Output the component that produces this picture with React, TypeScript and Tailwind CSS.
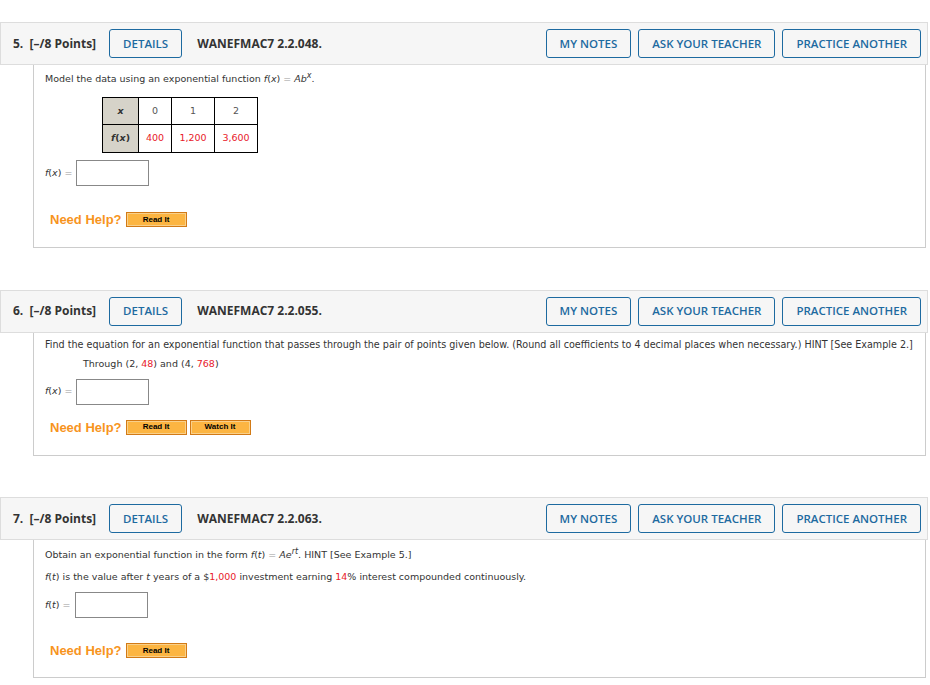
import React from 'react';

const head = { fontFamily: '"Open Sans", "Liberation Sans", sans-serif' };
const body = { fontFamily: '"DejaVu Sans", Verdana, sans-serif' };

function HeaderButton({ label }: { label: string }) {
  return (
    <button className="h-[29px] px-[13px] rounded-[3px] border border-[#1d6aa0] bg-[#f6f6f6] text-[11.5px] font-semibold text-[#1d6aa0]">
      {label}
    </button>
  );
}

function Header({ num, code }: { num: number; code: string }) {
  return (
    <div style={head} className="flex items-center h-[43px] bg-[#f6f6f6] border border-[#dddddd] pl-[12px] pr-[6px]">
      <span className="text-[12px] font-bold text-[#333333] whitespace-pre">{`${num}.  [–/8 Points]`}</span>
      <div className="ml-[13px]">
        <HeaderButton label="DETAILS" />
      </div>
      <span className="ml-[15px] text-[12px] font-bold text-[#333333]">{code}</span>
      <div className="ml-auto flex gap-[7px]">
        <HeaderButton label="MY NOTES" />
        <HeaderButton label="ASK YOUR TEACHER" />
        <HeaderButton label="PRACTICE ANOTHER" />
      </div>
    </div>
  );
}

function HelpButton({ label }: { label: string }) {
  return (
    <span
      style={{ fontFamily: '"Liberation Sans", Arial, sans-serif' }}
      className="inline-flex items-center justify-center w-[61px] h-[15px] border border-[#d27a16] bg-[#fcb542] shadow-[inset_0_0_0_1px_#f9d08a] text-[8px] font-bold text-black leading-none"
    >
      {label}
    </span>
  );
}

function NeedHelp({ buttons }: { buttons: string[] }) {
  return (
    <div className="flex items-center pl-[5px]">
      <span style={{ fontFamily: '"Liberation Sans", Arial, sans-serif' }} className="text-[13px] font-bold text-[#f7941d]">
        Need Help?
      </span>
      <div className="ml-[4px] flex gap-[3px]">
        {buttons.map((b) => (
          <HelpButton key={b} label={b} />
        ))}
      </div>
    </div>
  );
}

function Answer({ v }: { v: string }) {
  return (
    <div className="flex items-center">
      <span className="text-[9.5px] text-[#333333]">
        <i>f</i>(<i>{v}</i>) <span className="text-[#999999]">=</span>
      </span>
      <div className="ml-[4px] w-[73px] h-[26px] border border-[#888888] bg-white" />
    </div>
  );
}

function Body({ children }: { children: React.ReactNode }) {
  return (
    <div style={body} className="ml-[33px] mr-[2px] border-x border-b border-[#cccccc] pl-[11px] text-[9.5px] text-[#333333]">
      {children}
    </div>
  );
}

const red = 'text-[#e8202a]';

export default function App() {
  return (
    <div className="w-[930px] h-[685px] bg-white overflow-hidden pt-[22px] pr-[2px]">
      {/* 5 */}
      <Header num={5} code="WANEFMAC7 2.2.048." />
      <Body>
        <div className="pt-[6px] leading-[16px]">
          Model the data using an exponential function <i>f</i>(<i>x</i>) <span className="text-[#999]">=</span> <i>Ab</i>
          <sup className="text-[8px]"><i>x</i></sup>.
        </div>
        <table className="ml-[57px] mt-[10px] border-collapse text-center text-[9.5px]">
          <tbody>
            <tr className="h-[27px]">
              <td className="w-[36px] border border-black bg-[#d6d3c9] font-bold italic">x</td>
              <td className="w-[33px] border border-black text-[#555]">0</td>
              <td className="w-[43px] border border-black text-[#555]">1</td>
              <td className="w-[43px] border border-black text-[#555]">2</td>
            </tr>
            <tr className="h-[28px]">
              <td className="border border-black bg-[#d6d3c9] font-bold">
                <i>f</i>(<i>x</i>)
              </td>
              <td className={`border border-black ${red}`}>400</td>
              <td className={`border border-black ${red}`}>1,200</td>
              <td className={`border border-black ${red}`}>3,600</td>
            </tr>
          </tbody>
        </table>
        <div className="mt-[7px]">
          <Answer v="x" />
        </div>
        <div className="mt-[24px] pb-[17px]">
          <NeedHelp buttons={['Read It']} />
        </div>
      </Body>

      {/* 6 */}
      <div className="mt-[42px]">
        <Header num={6} code="WANEFMAC7 2.2.055." />
      </div>
      <Body>
        <div className="pt-[4px] leading-[16px] whitespace-nowrap text-[9.6px]">
          Find the equation for an exponential function that passes through the pair of points given below. (Round all coefficients to 4 decimal places when necessary.) HINT [See Example 2.]
        </div>
        <div className="mt-[3px] ml-[38px] leading-[16px]">
          Through (2, <span className={red}>48</span>) and (4, <span className={red}>768</span>)
        </div>
        <div className="mt-[7px]">
          <Answer v="x" />
        </div>
        <div className="mt-[13px] pb-[18px]">
          <NeedHelp buttons={['Read It', 'Watch It']} />
        </div>
      </Body>

      {/* 7 */}
      <div className="mt-[41px]">
        <Header num={7} code="WANEFMAC7 2.2.063." />
      </div>
      <Body>
        <div className="pt-[7px] leading-[16px]">
          Obtain an exponential function in the form <i>f</i>(<i>t</i>) <span className="text-[#999]">=</span> <i>Ae</i>
          <sup className="text-[8px]"><i>rt</i></sup>. HINT [See Example 5.]
        </div>
        <div className="mt-[6px] leading-[16px]">
          <i>f</i>(<i>t</i>) is the value after <i>t</i> years of a $<span className={red}>1,000</span> investment earning{' '}
          <span className={red}>14</span>% interest compounded continuously.
        </div>
        <div className="mt-[7px]">
          <Answer v="t" />
        </div>
        <div className="mt-[23px] pb-[16px]">
          <NeedHelp buttons={['Read It']} />
        </div>
      </Body>
    </div>
  );
}
